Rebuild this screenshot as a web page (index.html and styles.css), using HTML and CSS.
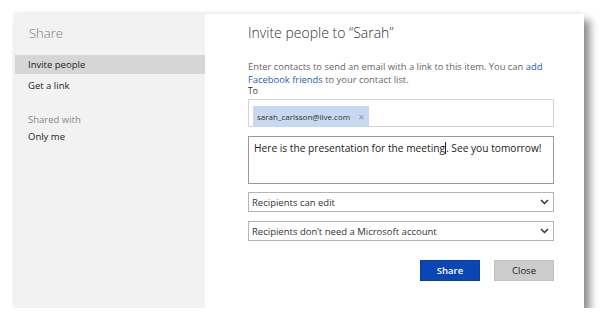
FILE: index.html
```html
<!DOCTYPE html>
<html lang="en">
<head>
  <meta charset="UTF-8">
  <title>Share - Invite people</title>
  <link rel="stylesheet" href="styles.css">
</head>
<body>
  <div class="dialog">
    <aside class="side">
      <h2 class="side-title">Share</h2>
      <ul class="side-menu">
        <li class="side-item active">Invite people</li>
        <li class="side-item">Get a link</li>
      </ul>
      <div class="side-label">Shared with</div>
      <div class="side-value">Only me</div>
    </aside>

    <main class="main">
      <h1 class="main-title">Invite people to “Sarah”</h1>
      <p class="desc">Enter contacts to send an email with a link to this item. You can <a href="#">add</a><br><a href="#">Facebook friends</a> to your contact list.</p>

      <label class="field-label">To</label>
      <div class="to-box">
        <span class="chip">sarah_carlsson@live.com <span class="chip-x">✕</span></span>
      </div>

      <div class="message">Here is the presentation for the meeting<span class="caret"></span>. See you tomorrow!</div>

      <div class="select">
        <span>Recipients can edit</span>
        <svg class="chev" width="9" height="6" viewBox="0 0 9 6"><path d="M1 1l3.5 3.5L8 1" fill="none" stroke="#333" stroke-width="1.5"/></svg>
      </div>
      <div class="select">
        <span>Recipients don’t need a Microsoft account</span>
        <svg class="chev" width="9" height="6" viewBox="0 0 9 6"><path d="M1 1l3.5 3.5L8 1" fill="none" stroke="#333" stroke-width="1.5"/></svg>
      </div>

      <div class="actions">
        <button class="btn btn-primary">Share</button>
        <button class="btn btn-secondary">Close</button>
      </div>
    </main>
  </div>
</body>
</html>
```

FILE: styles.css
```css
* {
  margin: 0;
  padding: 0;
  box-sizing: border-box;
}

body {
  font-family: 'Open Sans', 'Liberation Sans', sans-serif;
  background: #ffffff;
  color: #222;
}

.dialog {
  display: flex;
  width: 569px;
  height: 294px;
  margin: 14px 0 0 15px;
  background: #ffffff;
  box-shadow: 6px 6px 8px rgba(0, 0, 0, 0.45), -1px -1px 4px rgba(0, 0, 0, 0.08);
}

/* Left column */
.side {
  width: 190px;
  background: #f2f2f2;
  padding-top: 9px;
}

.side-title {
  font-size: 13px;
  font-weight: 300;
  color: #7a7a7a;
  padding-left: 14px;
  line-height: 20px;
  margin-bottom: 12px;
}

.side-menu {
  list-style: none;
  margin-bottom: 17px;
}

.side-item {
  height: 19px;
  line-height: 19px;
  font-size: 9.5px;
  padding-left: 13px;
  color: #222;
  margin-bottom: 2px;
}

.side-item.active {
  background: #d6d6d6;
}

.side-label {
  font-size: 9.5px;
  color: #888;
  padding-left: 13px;
  line-height: 16px;
}

.side-value {
  font-size: 9.5px;
  color: #222;
  padding-left: 13px;
  line-height: 18px;
}

/* Right column */
.main {
  flex: 1;
  padding: 8px 30px 0 43px;
}

.main-title {
  font-size: 14px;
  font-weight: 300;
  color: #333;
  line-height: 22px;
  margin-bottom: 16px;
}

.desc {
  font-size: 9.4px;
  line-height: 13px;
  color: #666;
}

.desc a {
  color: #1a5fb4;
  text-decoration: none;
}

.field-label {
  display: block;
  font-size: 8.5px;
  line-height: 9px;
  color: #333;
  margin-bottom: 4px;
}

.to-box {
  height: 28px;
  border: 1px solid #d4d4d4;
  padding: 3px 4px;
  margin-bottom: 9px;
}

.chip {
  display: inline-flex;
  align-items: center;
  height: 21px;
  padding: 0 4px;
  background: #c8d8f0;
  font-size: 8px;
  color: #333;
}

.chip-x {
  margin-left: 8px;
  font-size: 8px;
  color: #999;
}

.message {
  height: 48px;
  border: 1px solid #9a9a9a;
  padding: 3px 5px;
  font-size: 10.2px;
  line-height: 16px;
  color: #222;
  margin-bottom: 8px;
}

.caret {
  display: inline-block;
  width: 1px;
  height: 12px;
  background: #222;
  vertical-align: -2px;
}

.select {
  display: flex;
  align-items: center;
  justify-content: space-between;
  height: 20px;
  border: 1px solid #b4b4b4;
  padding: 0 3px;
  font-size: 9.5px;
  color: #333;
  margin-bottom: 9px;
}

.chev {
  margin-right: 1px;
}

.actions {
  display: flex;
  justify-content: flex-end;
  gap: 14px;
  margin-top: 19px;
}

.btn {
  height: 21px;
  width: 60px;
  font-family: inherit;
  font-size: 9.5px;
  font-weight: 600;
  border: 1px solid transparent;
}

.btn-primary {
  background: #0a47b5;
  color: #ffffff;
  border-color: #0a3f9e;
}

.btn-secondary {
  background: #cccccc;
  color: #222;
  border-color: #c2c2c2;
  font-weight: 400;
}
```
